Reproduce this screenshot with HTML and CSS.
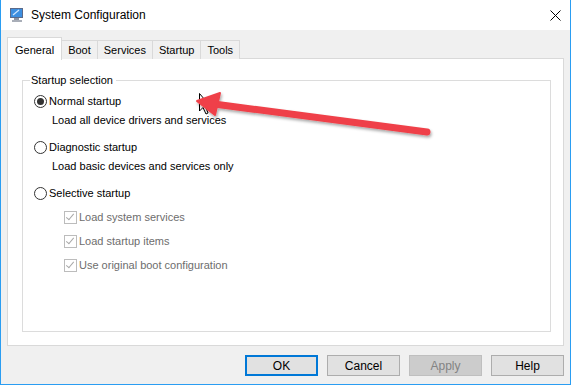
FILE: index.html
```html
<!DOCTYPE html>
<html lang="en">
<head>
    <meta charset="UTF-8">
    <meta name="viewport" content="width=device-width, initial-scale=1.0">
    <title>System Configuration</title>
    <link rel="stylesheet" href="styles.css">
</head>
<body>
    <div class="window">
        <div class="titlebar">
            <svg class="app-icon" width="16" height="16" viewBox="0 0 16 16">
                <rect x="1" y="1" width="13" height="10" fill="#5b6a8a"/>
                <rect x="2" y="2" width="11" height="8" fill="#3d8fe0"/>
                <path d="M4 8 L10 3" stroke="#cfe6ff" stroke-width="1.2"/>
                <rect x="5" y="11" width="5" height="2" fill="#8b93a3"/>
                <rect x="3" y="13" width="10" height="2" fill="#a9aeb8"/>
            </svg>
            <span class="title">System Configuration</span>
            <svg class="close" width="11" height="11" viewBox="0 0 11 11">
                <path d="M0.5 0.5 L10.5 10.5 M10.5 0.5 L0.5 10.5" stroke="#000" stroke-width="1"/>
            </svg>
        </div>
        <div class="content">
            <div class="tabs">
                <div class="tab active">General</div>
                <div class="tab">Boot</div>
                <div class="tab">Services</div>
                <div class="tab">Startup</div>
                <div class="tab">Tools</div>
            </div>
            <div class="panel">
                <fieldset class="group">
                    <legend>Startup selection</legend>
                    <div class="option">
                        <span class="radio checked"></span>Normal startup
                    </div>
                    <div class="desc">Load all device drivers and services</div>
                    <div class="option gap">
                        <span class="radio"></span>Diagnostic startup
                    </div>
                    <div class="desc">Load basic devices and services only</div>
                    <div class="option gap">
                        <span class="radio"></span>Selective startup
                    </div>
                    <div class="check">
                        <span class="box"></span>Load system services
                    </div>
                    <div class="check">
                        <span class="box"></span>Load startup items
                    </div>
                    <div class="check">
                        <span class="box"></span>Use original boot configuration
                    </div>
                </fieldset>
            </div>
            <div class="buttons">
                <button class="default">OK</button>
                <button>Cancel</button>
                <button disabled>Apply</button>
                <button>Help</button>
            </div>
        </div>

        <!-- pointer + annotation arrow drawn over the dialog -->
        <svg class="overlay" width="571" height="385" viewBox="0 0 571 385">
            <defs>
                <filter id="shadow" x="-10%" y="-50%" width="120%" height="200%">
                    <feDropShadow dx="1" dy="2" stdDeviation="1.5" flood-color="#000" flood-opacity="0.35"/>
                </filter>
            </defs>
            <path d="M199.5 93.5 L199.5 111 L203 107.5 L206 114 L208 113 L205.5 106.5 L210.5 106.5 Z" fill="#fff" stroke="#000" stroke-width="1"/>
            <g filter="url(#shadow)" fill="#ef4148" stroke="#ef4148">
                <path d="M427 132 L214 104" stroke-width="7" stroke-linecap="round" fill="none"/>
                <path d="M197 101 L220 93 L215 115 Z" stroke-width="2" stroke-linejoin="round"/>
            </g>
        </svg>
    </div>
</body>
</html>
```

FILE: styles.css
```css
body {
    margin: 0;
    padding: 0;
    font-family: "Segoe UI", "Liberation Sans", Arial, sans-serif;
    font-size: 11px;
    color: #000;
}
.window {
    position: relative;
    width: 571px;
    height: 385px;
    box-sizing: border-box;
    border: 1px solid #2a9df2;
    border-top: none;
    background-color: #f0f0f0;
    display: flex;
    flex-direction: column;
    overflow: hidden;
}
.titlebar {
    height: 30px;
    background-color: white;
    display: flex;
    align-items: center;
    padding: 0 9px 0 8px;
}
.app-icon {
    margin-right: 6px;
}
.title {
    flex: 1;
    font-size: 12px;
}
.content {
    flex: 1;
    display: flex;
    flex-direction: column;
    padding: 7px 6px 0 6px;
}
.tabs {
    display: flex;
    height: 21px;
    position: relative;
    z-index: 1;
}
.tab {
    margin-top: 3px;
    height: 18px;
    line-height: 18px;
    padding: 0 6px;
    border: 1px solid #d9d9d9;
    border-bottom: none;
    border-left: none;
    background-color: #f0f0f0;
}
.tab.active {
    margin-top: 0;
    height: 22px;
    line-height: 25px;
    padding: 0 7px;
    border-left: 1px solid #d9d9d9;
    background-color: white;
}
.panel {
    height: 288px;
    box-sizing: border-box;
    background-color: white;
    border: 1px solid #d9d9d9;
    padding: 14px 11px 0 14px;
}
.group {
    margin: 0 1px 0 0;
    height: 259px;
    box-sizing: border-box;
    border: 1px solid #dcdcdc;
    padding: 5px 0 0 11px;
}
.group legend {
    padding: 0 3px 0 1px;
    margin-left: -4px;
    line-height: 14px;
}
.option {
    display: flex;
    align-items: center;
    height: 18px;
}
.option.gap {
    margin-top: 9px;
}
.radio {
    width: 11px;
    height: 11px;
    border: 1px solid #333;
    border-radius: 50%;
    margin-right: 2px;
    position: relative;
    box-sizing: content-box;
}
.radio.checked::after {
    content: "";
    position: absolute;
    left: 2px;
    top: 2px;
    width: 7px;
    height: 7px;
    border-radius: 50%;
    background-color: #333;
}
.desc {
    height: 18px;
    line-height: 18px;
    margin-top: 1px;
    padding-left: 18px;
}
.check {
    display: flex;
    align-items: center;
    height: 18px;
    margin-top: 6px;
    padding-left: 30px;
    color: #6d6d6d;
}
.box {
    width: 11px;
    height: 11px;
    border: 1px solid #bcbcbc;
    margin-right: 2px;
    position: relative;
}
.box::after {
    content: "";
    position: absolute;
    left: 3px;
    top: 0px;
    width: 3px;
    height: 7px;
    border-right: 1.5px solid #a8a8a8;
    border-bottom: 1.5px solid #a8a8a8;
    transform: rotate(40deg);
}
.buttons {
    display: flex;
    justify-content: flex-end;
    gap: 9px;
    padding-top: 9px;
}
button {
    width: 73px;
    height: 21px;
    box-sizing: border-box;
    font-family: inherit;
    font-size: 12px;
    color: #000;
    background-color: #e1e1e1;
    border: 1px solid #adadad;
    padding: 0;
}
button.default {
    border: 2px solid #0078d7;
}
button:disabled {
    background-color: #cccccc;
    border-color: #bfbfbf;
    color: #838383;
}
.overlay {
    position: absolute;
    left: -1px;
    top: 0;
    pointer-events: none;
}
```
